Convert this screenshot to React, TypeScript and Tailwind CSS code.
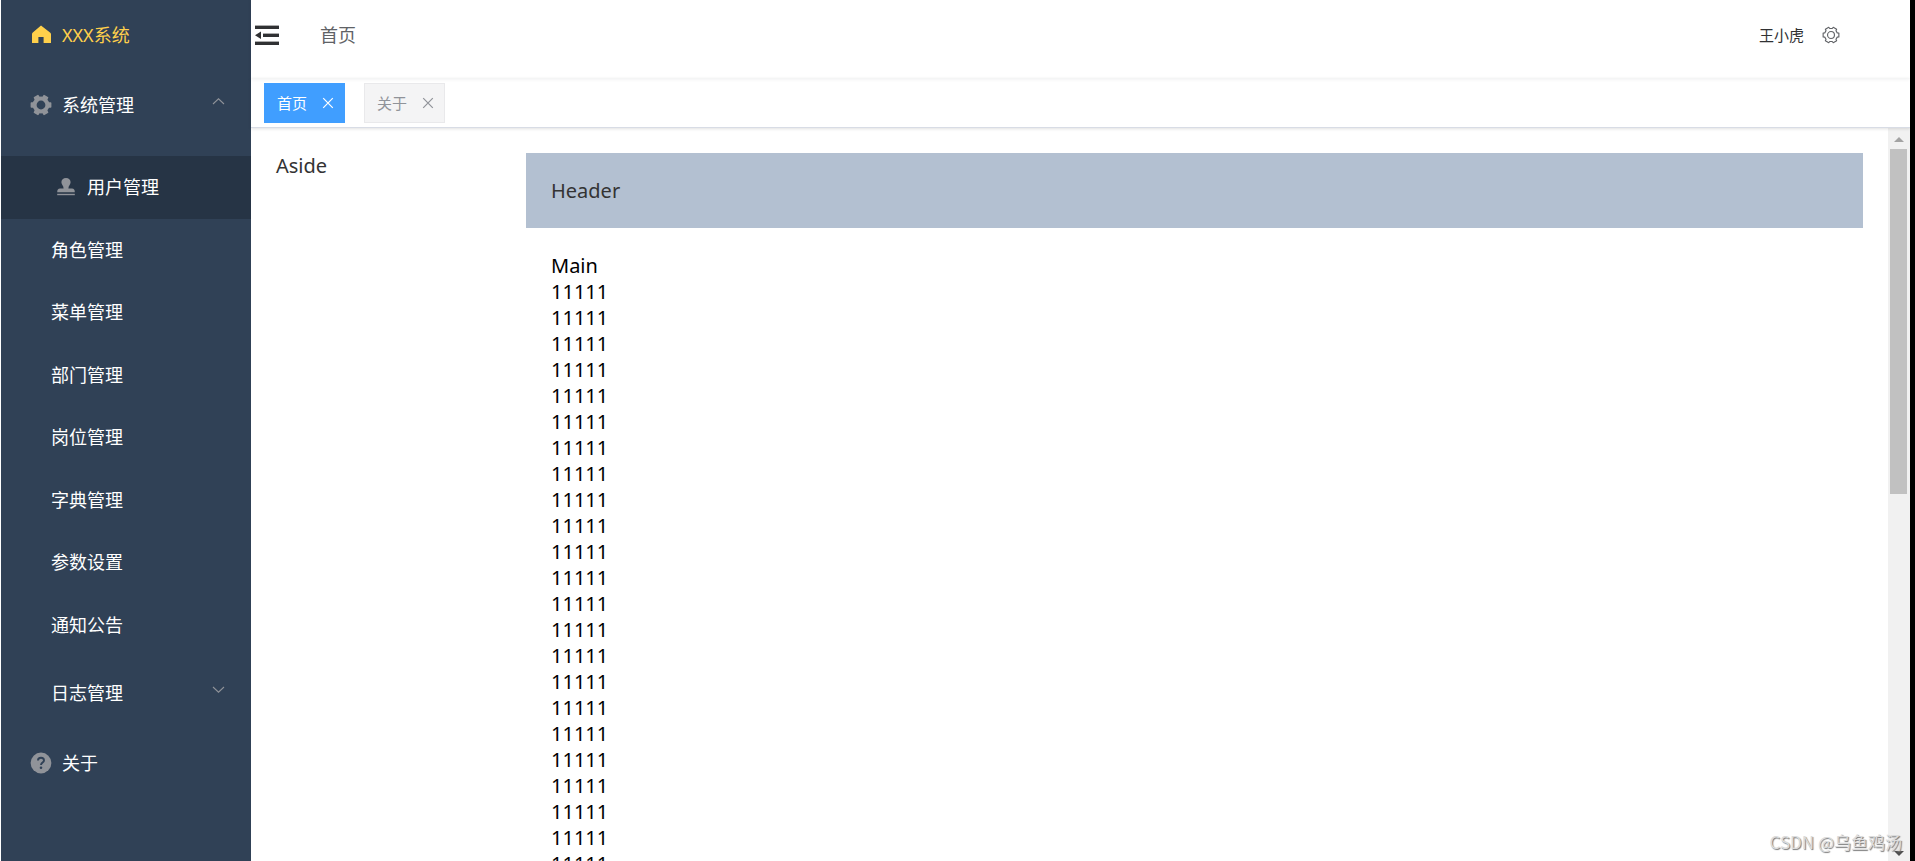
import React, { useState } from "react";

interface MenuItem {
  key: string;
  label: string;
}

interface TabItem {
  key: string;
  label: string;
}

const menuItems: MenuItem[] = [
  { key: "user", label: "用户管理" },
  { key: "role", label: "角色管理" },
  { key: "menu", label: "菜单管理" },
  { key: "dept", label: "部门管理" },
  { key: "post", label: "岗位管理" },
  { key: "dict", label: "字典管理" },
  { key: "param", label: "参数设置" },
  { key: "notice", label: "通知公告" },
];

const lines = Array.from({ length: 23 }, () => "11111");

// Six teeth, four points per tooth
const gearPoints = (outer: number, inner: number) =>
  [0, 60, 120, 180, 240, 300]
    .flatMap((deg) => [
      [deg - 19, inner],
      [deg - 14, outer],
      [deg + 14, outer],
      [deg + 19, inner],
    ])
    .map(([deg, r]) => {
      const a = (deg * Math.PI) / 180;
      return `${(12 + r * Math.cos(a)).toFixed(2)},${(12 + r * Math.sin(a)).toFixed(2)}`;
    })
    .join(" ");

const HomeIcon = () => (
  <svg className="w-6 h-6" viewBox="0 0 24 24" fill="#ffd04b">
    <path d="M12 2.6 L21 9.4 Q22 10.2 22 11.2 V20 H14.6 V14 H9.4 V20 H3 V11.2 Q3 10.2 3.8 9.4 Z" />
  </svg>
);

const ToolsIcon = () => (
  <svg className="w-6 h-6" viewBox="0 0 24 24">
    <circle cx="12" cy="12" r="6.4" fill="none" stroke="#909399" strokeWidth="4" />
    {[0, 60, 120].map((deg) => (
      <g key={deg} transform={`rotate(${deg} 12 12)`} fill="#909399">
        <rect x="1.6" y="9.2" width="4" height="5.6" rx="0.8" />
        <rect x="18.4" y="9.2" width="4" height="5.6" rx="0.8" />
      </g>
    ))}
  </svg>
);

const StampIcon = () => (
  <svg className="w-6 h-6" viewBox="0 0 24 24" fill="#909399">
    <path d="M12 3 C14.8 3 16.6 4.9 16.6 7.3 C16.6 9.6 14.4 10.6 14.4 13.6 H18 Q20.8 13.6 20.8 17.3 H3.2 Q3.2 13.6 6 13.6 H9.6 C9.6 10.6 7.4 9.6 7.4 7.3 C7.4 4.9 9.2 3 12 3 Z" />
    <rect x="3.2" y="18.8" width="17.6" height="1.4" />
  </svg>
);

const QuestionIcon = () => (
  <svg className="w-6 h-6" viewBox="0 0 24 24">
    <circle cx="12" cy="12" r="10.4" fill="#909399" />
    <path d="M9 9.6 C9 7.8 10.2 6.8 12 6.8 C13.8 6.8 15 7.8 15 9.4 C15 11.4 12 11.6 12 14" fill="none" stroke="#304156" strokeWidth="1.9" />
    <circle cx="12" cy="16.8" r="1.3" fill="#304156" />
  </svg>
);

const FoldIcon = () => (
  <svg className="w-6 h-5" viewBox="0 0 24 20" fill="#303133">
    <rect y="0.6" width="24" height="3.4" />
    <rect x="8" y="8.6" width="16" height="3.4" />
    <rect y="16.6" width="24" height="3.4" />
    <path d="M0 10.3 L6 6.6 V14 Z" />
  </svg>
);

const SettingIcon = () => (
  <svg className="w-[18px] h-[18px]" viewBox="0 0 24 24" fill="none" stroke="#606266" strokeWidth="1.5" strokeLinejoin="round">
    <polygon points={gearPoints(10.8, 8.8)} />
    <circle cx="12" cy="12" r="4.6" />
  </svg>
);

const ArrowIcon = ({ up }: { up?: boolean }) => (
  <svg className="ml-auto mb-2 w-[15px] h-[15px]" viewBox="0 0 15 15" fill="none" stroke="#909399" strokeWidth="1.1">
    <path d={up ? "M2 10 L7.5 4.8 L13 10" : "M2 5 L7.5 10.2 L13 5"} />
  </svg>
);

const CloseIcon = () => (
  <svg className="w-3 h-3" viewBox="0 0 12 12" fill="none" stroke="currentColor" strokeWidth="1.2">
    <path d="M1.2 1.2 L10.8 10.8 M10.8 1.2 L1.2 10.8" />
  </svg>
);

const App: React.FC = () => {
  const [activeMenu, setActiveMenu] = useState<string>("user");
  const [open, setOpen] = useState<boolean>(true);
  const [activeTab, setActiveTab] = useState<string>("home");
  const [tabs, setTabs] = useState<TabItem[]>([
    { key: "home", label: "首页" },
    { key: "about", label: "关于" },
  ]);

  const closeTab = (key: string) => setTabs(tabs.filter((t) => t.key !== key));

  return (
    <div className="relative flex h-screen overflow-hidden border-l border-white border-r-[5px] border-r-black bg-white font-['Noto_Sans','Noto_Sans_CJK_SC',sans-serif] text-[20px] leading-[26px]">
      {/* Sidebar */}
      <nav className="w-[250px] shrink-0 overflow-hidden bg-[#304156] text-[18px] text-white">
        <a href="#home" className="flex h-[70px] items-center px-[25px] text-[#ffd04b]">
          <span className="mr-[6px] flex w-[30px] justify-center"><HomeIcon /></span>
          XXX系统
        </a>

        <button type="button" onClick={() => setOpen(!open)} className="flex h-[70px] w-full items-center px-[25px]">
          <span className="mr-[6px] flex w-[30px] justify-center"><ToolsIcon /></span>
          系统管理
          <ArrowIcon up={open} />
        </button>

        {open && (
          <div className="pt-4">
            <ul className="grid h-[500px] grid-rows-8">
              {menuItems.map((item) => (
                <li key={item.key}>
                  <a
                    href={`#${item.key}`}
                    onClick={() => setActiveMenu(item.key)}
                    className={`flex h-full items-center pl-[50px] ${activeMenu === item.key ? "bg-[#263445]" : ""}`}
                  >
                    {item.key === "user" && (
                      <span className="mr-[6px] flex w-[30px] justify-center"><StampIcon /></span>
                    )}
                    {item.label}
                  </a>
                </li>
              ))}
            </ul>
            <button type="button" className="mt-[2px] flex h-[70px] w-full items-center pl-[50px] pr-[25px]">
              日志管理
              <ArrowIcon />
            </button>
          </div>
        )}

        <a href="#about" className="flex h-[70px] items-center px-[25px]">
          <span className="mr-[6px] flex w-[30px] justify-center"><QuestionIcon /></span>
          关于
        </a>
      </nav>

      <div className="flex min-w-0 flex-1 flex-col">
        {/* Top bar */}
        <header className="relative z-10 flex h-[78px] shrink-0 items-center pb-2 pl-1 pr-[70px] shadow-[0_1px_4px_rgba(0,21,41,0.08)]">
          <button type="button" aria-label="折叠菜单"><FoldIcon /></button>
          <span className="ml-[41px] text-[18px] text-[#606266]">首页</span>
          <div className="ml-auto flex items-center gap-[18px] text-[15px] text-[#303133]">
            <span>王小虎</span>
            <button type="button" aria-label="设置"><SettingIcon /></button>
          </div>
        </header>

        {/* Opened pages */}
        <div className="relative z-10 flex h-[50px] shrink-0 items-center gap-[19px] border-b border-[#d8dce5] px-[13px] text-[15px] shadow-[0_1px_3px_rgba(0,0,0,0.12)]">
          {tabs.map((tab) => (
            <div
              key={tab.key}
              className={`flex h-10 items-center gap-[15px] border pl-3 pr-[10px] ${
                activeTab === tab.key
                  ? "border-[#409eff] bg-[#409eff] text-white"
                  : "border-[#e9e9eb] bg-[#f4f4f5] text-[#909399]"
              }`}
            >
              <button type="button" onClick={() => setActiveTab(tab.key)}>{tab.label}</button>
              <button type="button" aria-label={`关闭${tab.label}`} onClick={() => closeTab(tab.key)}>
                <CloseIcon />
              </button>
            </div>
          ))}
        </div>

        {/* Page content */}
        <div className="flex min-h-0 flex-1">
          <div className="flex min-w-0 flex-1 overflow-hidden p-[25px]">
            <aside className="w-[250px] shrink-0 text-[#333]">Aside</aside>
            <section className="min-w-0 flex-1">
              <div className="flex h-[75px] items-center bg-[#b3c0d1] px-[25px] text-[#333]">Header</div>
              <main className="p-[25px] text-black">
                Main
                {lines.map((line, i) => (
                  <div key={i}>{line}</div>
                ))}
              </main>
            </section>
          </div>

          {/* Scrollbar */}
          <div className="flex w-[22px] shrink-0 flex-col items-center bg-[#f1f1f1] pr-px">
            <svg className="h-[21px] w-[10px] shrink-0" viewBox="0 0 10 21" fill="#a3a3a3">
              <path d="M0 14 L5 9 L10 14 Z" />
            </svg>
            <div className="h-[47%] w-[17px] bg-[#c1c1c1]" />
            <svg className="mt-auto h-[21px] w-[10px] shrink-0" viewBox="0 0 10 21" fill="#505050">
              <path d="M0 11 L5 16 L10 11 Z" />
            </svg>
          </div>
        </div>
      </div>

      {/* Watermark */}
      <span className="absolute bottom-[6px] right-2 z-20 font-['Noto_Sans_CJK_SC',sans-serif] text-[17px] text-[#dcdcdc] [text-shadow:1px_1px_1px_#777]">
        CSDN @乌鱼鸡汤
      </span>
    </div>
  );
};

export default App;
